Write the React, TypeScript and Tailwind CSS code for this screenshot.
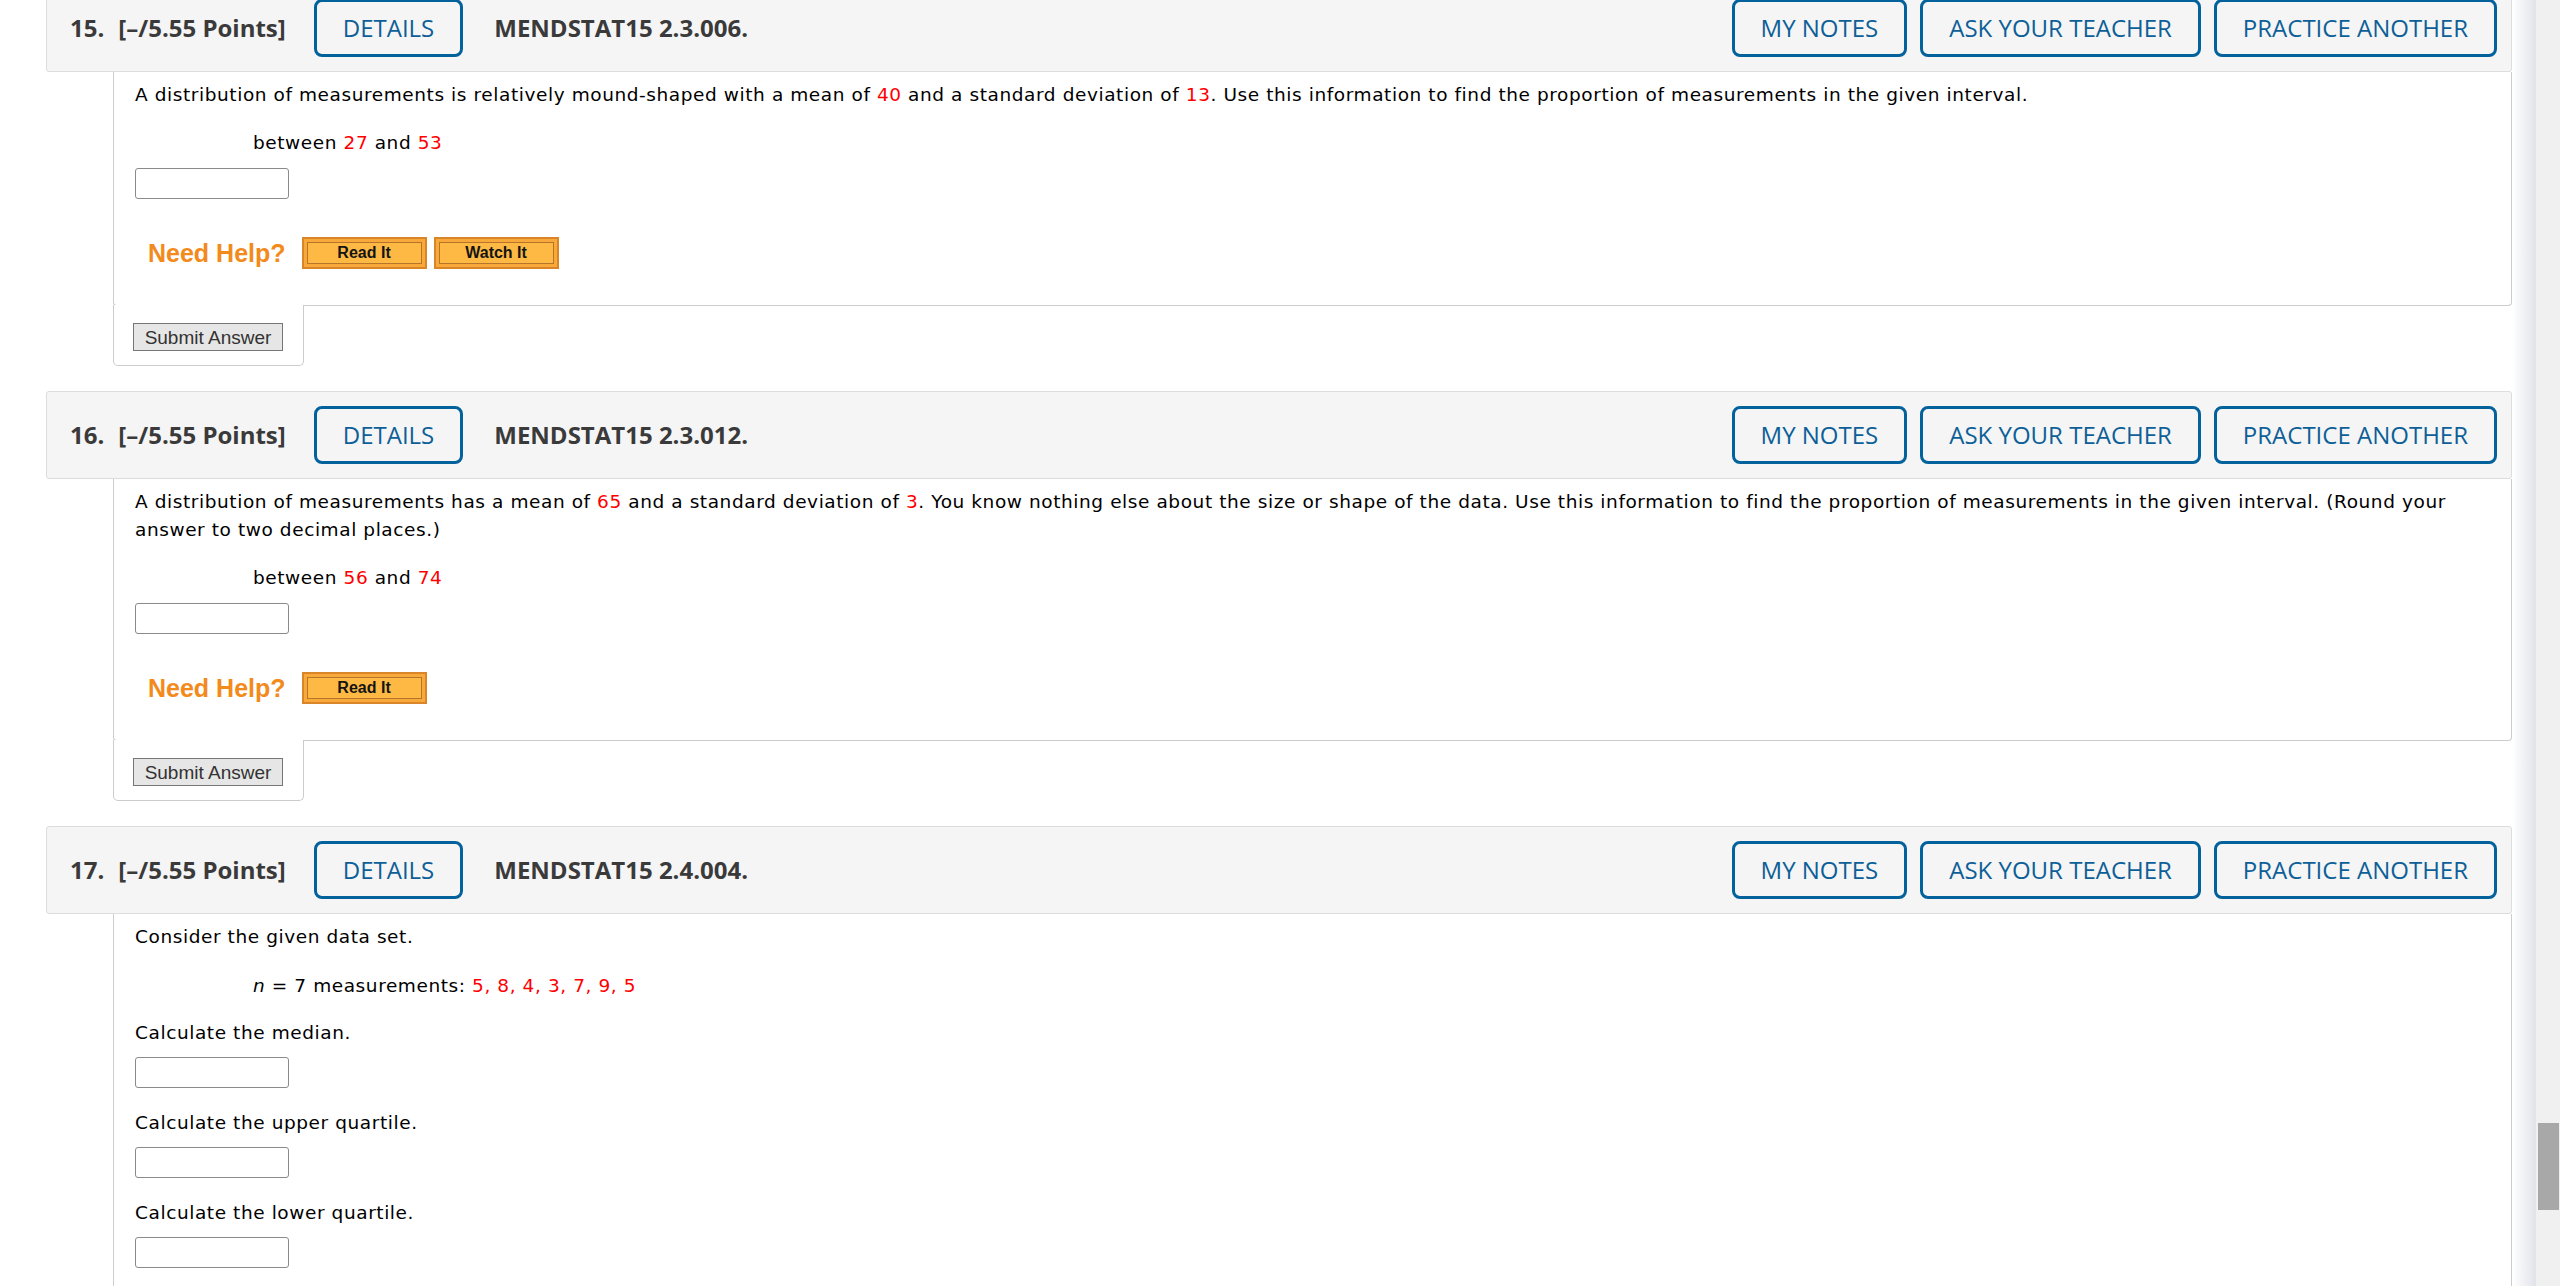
import type { ReactNode } from 'react'

function HeaderButton({ children, className = '' }: { children: ReactNode; className?: string }) {
  return (
    <button
      className={
        'flex h-[58px] items-center rounded-[8px] border-[3px] border-[#03619b] bg-[#f5f5f5] px-[26px] text-[24px] font-medium text-[#0d5f98] ' +
        className
      }
    >
      {children}
    </button>
  )
}

function Header({ num, code }: { num: number; code: string }) {
  return (
    <div className="ml-[46px] flex h-[88px] items-center rounded-[3px] border border-[#dddddd] bg-[#f5f5f5] pl-[23px] pr-[14px] font-['Open_Sans',sans-serif]">
      <span className="text-[24px] font-bold text-[#3a3a3a]">{num}.</span>
      <span className="ml-[14px] text-[24px] font-bold text-[#3a3a3a]">[–/5.55 Points]</span>
      <HeaderButton className="ml-[28px]">DETAILS</HeaderButton>
      <span className="ml-[31px] text-[24px] font-bold text-[#3a3a3a]">{code}</span>
      <div className="ml-auto flex gap-[13px]">
        <HeaderButton>MY NOTES</HeaderButton>
        <HeaderButton>ASK YOUR TEACHER</HeaderButton>
        <HeaderButton>PRACTICE ANOTHER</HeaderButton>
      </div>
    </div>
  )
}

function Red({ children }: { children: ReactNode }) {
  return <span className="text-[#ff0000]">{children}</span>
}

function AnswerBox() {
  return <input type="text" className="block h-[31px] w-[154px] rounded-[3px] border border-[#8a8a8a] bg-white" />
}

function HelpButton({ label }: { label: string }) {
  return (
    <div className="flex h-[32px] w-[125px] border-2 border-[#d9862a] bg-[#f9a83a] p-[3px]">
      <div className="flex h-full w-full items-center justify-center border border-[#b5762c] bg-[#fdb944] font-['Liberation_Sans',Arial,sans-serif] text-[16px] font-bold text-[#141414]">
        {label}
      </div>
    </div>
  )
}

function NeedHelp({ watch }: { watch?: boolean }) {
  return (
    <div className="mt-[38px] flex items-center pl-[13px] tracking-normal">
      <span className="font-['Liberation_Sans',Arial,sans-serif] text-[25px] font-bold text-[#f28a1c]">Need Help?</span>
      <div className="ml-[16px] flex gap-[7px]">
        <HelpButton label="Read It" />
        {watch && <HelpButton label="Watch It" />}
      </div>
    </div>
  )
}

function SubmitTab() {
  return (
    <div className="relative -mt-px mb-[25px] ml-[113px] w-[191px] rounded-b-[5px] border-x border-b border-[#cccccc] bg-white pb-[14px] pl-[19px] pt-[18px]">
      <button className="h-[28px] w-[150px] border border-[#767676] bg-[#e6e6e6] font-['Liberation_Sans',Arial,sans-serif] text-[19px] text-[#333333]">
        Submit Answer
      </button>
    </div>
  )
}

const panel =
  "ml-[113px] rounded-b-[4px] border-x border-b border-[#cccccc] bg-white pl-[21px] pr-[22px] pt-[9px] font-['DejaVu_Sans',Verdana,sans-serif] text-[18.5px] leading-[28px] tracking-[0.58px] text-black"

export default function App() {
  return (
    <div className="flex h-screen overflow-hidden bg-white">
      <div className="min-w-0 flex-1 overflow-hidden">
        <div className="-mt-[16px]">
          {/* question 15 */}
          <Header num={15} code="MENDSTAT15 2.3.006." />
          <div className={panel + ' pb-[36px]'}>
            <p>
              A distribution of measurements is relatively mound-shaped with a mean of <Red>40</Red> and a standard
              deviation of <Red>13</Red>. Use this information to find the proportion of measurements in the given
              interval.
            </p>
            <p className="mt-[20px] pl-[118px]">
              between <Red>27</Red> and <Red>53</Red>
            </p>
            <div className="mt-[11px]">
              <AnswerBox />
            </div>
            <NeedHelp watch />
          </div>
          <SubmitTab />

          {/* question 16 */}
          <Header num={16} code="MENDSTAT15 2.3.012." />
          <div className={panel + ' pb-[36px]'}>
            <p>
              A distribution of measurements has a mean of <Red>65</Red> and a standard deviation of <Red>3</Red>. You
              know nothing else about the size or shape of the data. Use this information to find the proportion of
              measurements in the given interval. (Round your
              <br />
              answer to two decimal places.)
            </p>
            <p className="mt-[20px] pl-[118px]">
              between <Red>56</Red> and <Red>74</Red>
            </p>
            <div className="mt-[11px]">
              <AnswerBox />
            </div>
            <NeedHelp />
          </div>
          <SubmitTab />

          {/* question 17 */}
          <Header num={17} code="MENDSTAT15 2.4.004." />
          <div className={panel + ' pb-[40px]'}>
            <p>Consider the given data set.</p>
            <p className="mt-[21px] pl-[118px]">
              <i>n</i> = 7 measurements: <Red>5, 8, 4, 3, 7, 9, 5</Red>
            </p>
            <p className="mt-[19px]">Calculate the median.</p>
            <div className="mt-[10px]">
              <AnswerBox />
            </div>
            <p className="mt-[21px]">Calculate the upper quartile.</p>
            <div className="mt-[10px]">
              <AnswerBox />
            </div>
            <p className="mt-[21px]">Calculate the lower quartile.</p>
            <div className="mt-[10px]">
              <AnswerBox />
            </div>
          </div>
        </div>
      </div>
      <div className="w-[24px] shrink-0 bg-gradient-to-r from-white to-[#e2e3ea]" />
      <div className="relative w-[24px] shrink-0 bg-[#f0f0f0]">
        <div className="absolute left-[2px] top-[1123px] h-[87px] w-[21px] bg-[#a8a8a8]" />
      </div>
    </div>
  )
}
